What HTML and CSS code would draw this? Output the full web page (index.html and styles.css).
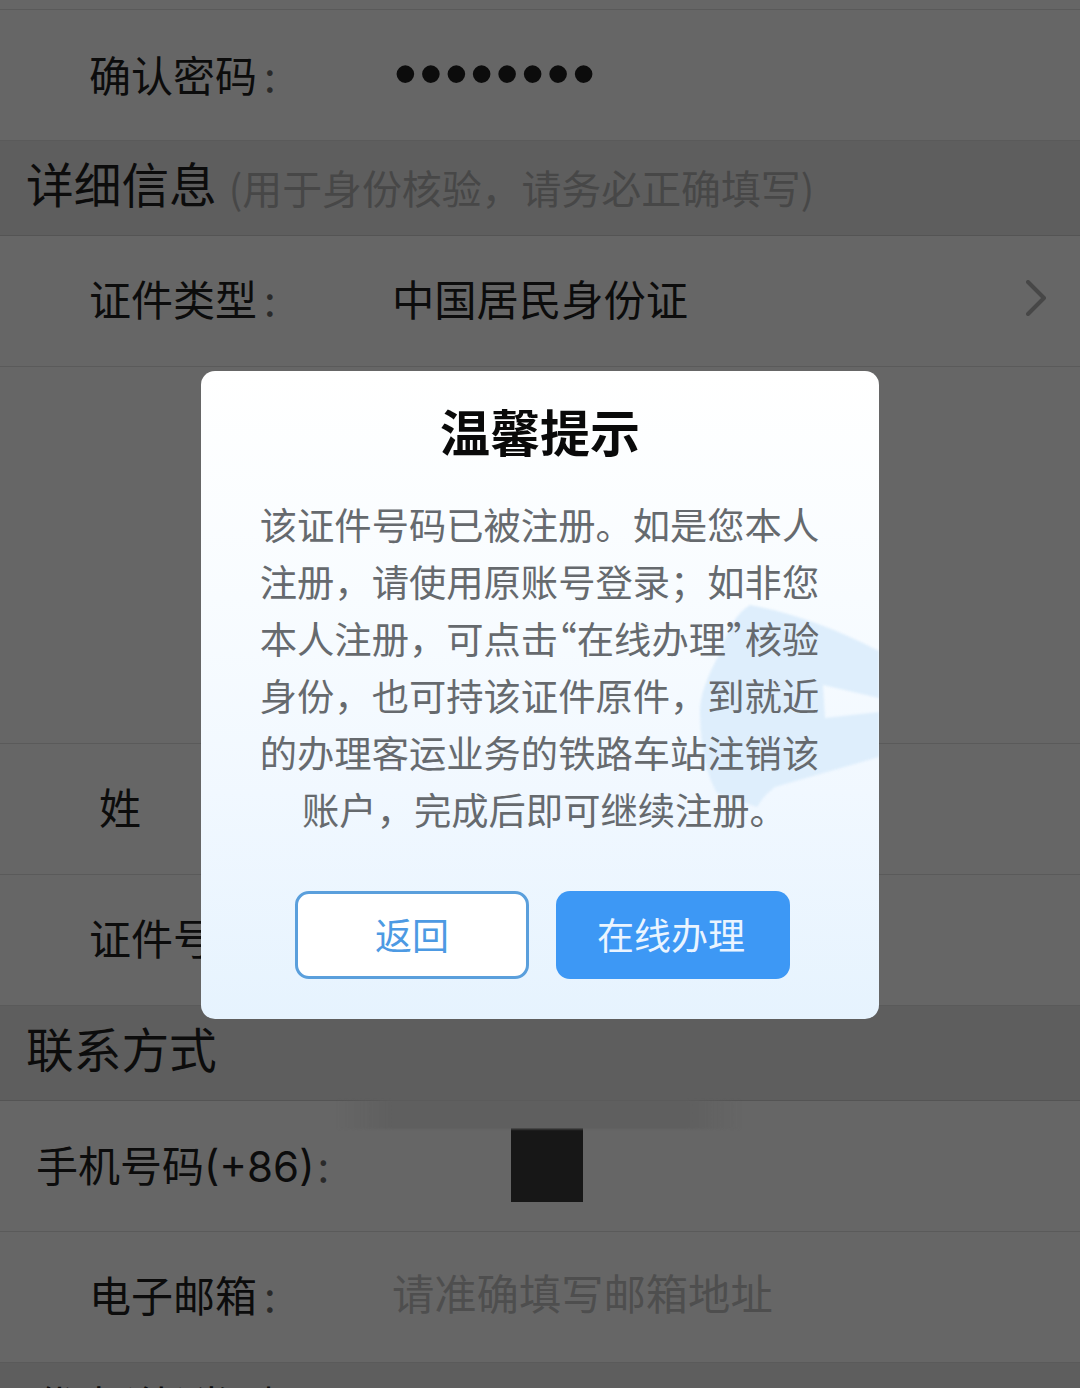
FILE: index.html
```html
<!DOCTYPE html>
<html lang="zh-CN">
<head>
<meta charset="utf-8">
<title>温馨提示</title>
<link rel="stylesheet" href="styles.css">
</head>
<body>
<div class="page">
  <div class="row row-stub"></div>
  <div class="row row-password">
    <span class="label">确认密码<span class="colon">:</span></span>
    <span class="mask">••••••••</span>
  </div>
  <div class="section">
    <span class="section-title">详细信息</span>
    <span class="section-note">(用于身份核验，请务必正确填写)</span>
  </div>
  <div class="row">
    <span class="label">证件类型<span class="colon">:</span></span>
    <span class="value">中国居民身份证</span>
    <svg class="chevron" viewBox="0 0 20 36" width="20" height="36" aria-hidden="true"><path d="M2 2 L18 18 L2 34"/></svg>
  </div>
  <div class="row row-tall"></div>
  <div class="row row-surname">
    <span class="label">姓</span>
  </div>
  <div class="row">
    <span class="label">证件号码<span class="colon">:</span></span>
  </div>
  <div class="section">
    <span class="section-title">联系方式</span>
  </div>
  <div class="row row-phone">
    <span class="label">手机号码<span class="latin">(+86)</span><span class="colon">:</span></span>
    <span class="redaction"></span>
  </div>
  <div class="row">
    <span class="label">电子邮箱<span class="colon">:</span></span>
    <span class="value placeholder">请准确填写邮箱地址</span>
  </div>
  <div class="row row-cut">
    <span class="label">优惠(待)类型<span class="colon">:</span></span>
  </div>

  <div class="smudge"></div>

  <div class="modal">
    <svg class="watermark" viewBox="0 0 678 648" aria-hidden="true">
      <path d="M549 234 Q530 245 519 282 Q498 320 499 342 Q500 395 516 422 L556 436 Q562 425 574 416 L678 386 L678 341 L624 347 L622 314 L678 327 L678 280 Q610 245 549 234 Z"/>
    </svg>
    <h1 class="modal-title">温馨提示</h1>
    <p class="modal-text">该证件号码已被注册。如是您本人<br>注册，请使用原账号登录；如非您<br>本人注册，可点击<span class="quote">“</span>在线办理<span class="quote">”</span>核验<br>身份，也可持该证件原件，到就近<br>的办理客运业务的铁路车站注销该<br><span class="last-line">账户，完成后即可继续注册。</span></p>
    <div class="modal-actions">
      <button class="btn btn-outline" type="button">返回</button>
      <button class="btn btn-solid" type="button">在线办理</button>
    </div>
  </div>
</div>
</body>
</html>
```

FILE: styles.css
```css
* {
  box-sizing: border-box;
}

html,
body {
  margin: 0;
  padding: 0;
}

body {
  font-family: "Noto Sans CJK SC", "Liberation Sans", sans-serif;
  background: #666666;
}

.page {
  position: relative;
  width: 1080px;
  height: 1388px;
  overflow: hidden;
  background: #666666;
}

.row {
  display: flex;
  align-items: center;
  height: 131px;
  padding-left: 89px;
  padding-bottom: 7px;
  border-bottom: 1px solid #5a5a5a;
  font-size: 42px;
  color: #0c0c0c;
}

.row-stub {
  height: 10px;
  padding: 0;
}

.row-tall {
  height: 377px;
}

.row-surname {
  padding-left: 99px;
}

.row-phone {
  padding-left: 36px;
}

.row-cut {
  align-items: flex-start;
  padding-left: 36px;
  padding-top: 13px;
  border-bottom: 0;
  background: #5e5e5e;
}

.label {
  flex: 0 0 303px;
  white-space: nowrap;
  line-height: 56px;
}

.row-password .label {
  margin-top: 4px;
}

.row-surname .label {
  flex-basis: 293px;
}

.row-phone .label {
  flex-basis: 357px;
  margin-top: 6px;
}

.latin {
  font-family: "Inter", "Liberation Sans", sans-serif;
}

.colon {
  padding-left: 7px;
  color: #2a2a2a;
}

.row-phone .colon {
  padding-left: 3px;
}

.value {
  white-space: nowrap;
  font-size: 42.3px;
  line-height: 56px;
}

.placeholder {
  margin-bottom: 4px;
  color: #4e4e4e;
}

.mask {
  margin-top: 4px;
  margin-left: 2px;
  font-family: "Liberation Sans", sans-serif;
  font-size: 65px;
  line-height: 56px;
  letter-spacing: 2.7px;
  color: #0c0c0c;
}

.chevron {
  margin-left: auto;
  margin-right: 34px;
  fill: none;
  stroke: #474747;
  stroke-width: 4;
  stroke-linecap: round;
  stroke-linejoin: round;
}

.redaction {
  width: 72px;
  height: 74px;
  margin-top: 4px;
  margin-left: 118px;
  background: #171717;
}

.section {
  display: flex;
  align-items: center;
  gap: 16px;
  height: 95px;
  padding-left: 26px;
  padding-bottom: 8px;
  background: #5e5e5e;
  border-bottom: 1px solid #545454;
}

.section-title {
  margin-bottom: 3px;
  font-size: 47.7px;
  color: #0c0c0c;
  white-space: nowrap;
}

.section-note {
  margin-top: 4px;
  margin-left: -4px;
  font-size: 39.9px;
  color: #474747;
  white-space: nowrap;
}

.smudge {
  position: absolute;
  left: 337px;
  top: 1100px;
  width: 404px;
  height: 29px;
  background: linear-gradient(90deg, rgba(95, 95, 95, 0) 0%, #5f5f5f 14%, #5f5f5f 86%, rgba(95, 95, 95, 0) 100%);
  filter: blur(1px);
}

.modal {
  position: absolute;
  left: 201px;
  top: 371px;
  width: 678px;
  height: 648px;
  padding-top: 27px;
  border-radius: 14px;
  overflow: hidden;
  background: linear-gradient(180deg, #ffffff 0%, #f8fcff 35%, #f1f8ff 65%, #e6f3fe 100%);
}

.watermark {
  position: absolute;
  left: 0;
  top: 0;
  width: 678px;
  height: 648px;
  fill: #deeefc;
  filter: blur(1px);
}

.modal-title {
  position: relative;
  margin: 0;
  font-size: 50px;
  line-height: 64px;
  font-weight: 700;
  color: #0a0a0a;
  text-align: center;
}

.modal-text {
  position: relative;
  margin: 34px 0 0;
  padding-right: 1px;
  font-size: 37.3px;
  line-height: 57px;
  color: #666a6e;
  text-align: center;
  white-space: nowrap;
}

.quote {
  font-feature-settings: "halt";
}

.last-line {
  padding-left: 10px;
}

.modal-actions {
  position: relative;
  display: flex;
  justify-content: center;
  gap: 27px;
  margin-top: 53px;
  padding-left: 5px;
}

.btn {
  width: 234px;
  height: 88px;
  border-radius: 14px;
  font-family: inherit;
  font-size: 37px;
  padding: 0 0 2px;
}

.btn-outline {
  background: #ffffff;
  border: 3px solid #5a9fdc;
  color: #4d9ae3;
}

.btn-solid {
  padding-right: 4px;
  background: #3d98f5;
  border: 0;
  color: #eaf4ff;
}
```
